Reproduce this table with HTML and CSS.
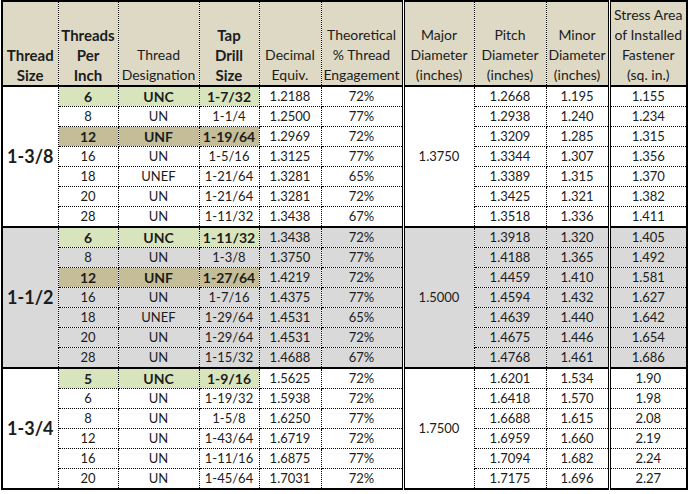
FILE: index.html
```html
<!DOCTYPE html>
<html>
<head>
<meta charset="utf-8">
<link rel="stylesheet" href="styles.css">
</head>
<body>
<table class="spec">
  <colgroup>
    <col class="c-size"><col class="c-tpi"><col class="c-des"><col class="c-tap"><col class="c-dec"><col class="c-eng"><col class="c-maj"><col class="c-pit"><col class="c-min"><col class="c-str">
  </colgroup>
  <thead>
    <tr class="head">
      <th class="b">Thread<br>Size</th>
      <th class="b">Threads<br>Per<br>Inch</th>
      <th>Thread<br>Designation</th>
      <th class="b">Tap<br>Drill<br>Size</th>
      <th>Decimal<br>Equiv.</th>
      <th>Theoretical<br>% Thread<br>Engagement</th>
      <th class="dbl">Major<br>Diameter<br>(inches)</th>
      <th>Pitch<br>Diameter<br>(inches)</th>
      <th>Minor<br>Diameter<br>(inches)</th>
      <th class="dbl">Stress Area<br>of Installed<br>Fastener<br>(sq. in.)</th>
    </tr>
  </thead>
  <tbody class="sec">
    <tr class="unc"><td class="size" rowspan="7">1-3/8</td><td class="hl">6</td><td class="hl">UNC</td><td class="hl">1-7/32</td><td>1.2188</td><td>72%</td><td class="maj dbl" rowspan="7">1.3750</td><td>1.2668</td><td>1.195</td><td class="dbl">1.155</td></tr>
    <tr><td>8</td><td>UN</td><td>1-1/4</td><td>1.2500</td><td>77%</td><td>1.2938</td><td>1.240</td><td class="dbl">1.234</td></tr>
    <tr class="unf"><td class="hl">12</td><td class="hl">UNF</td><td class="hl">1-19/64</td><td>1.2969</td><td>72%</td><td>1.3209</td><td>1.285</td><td class="dbl">1.315</td></tr>
    <tr><td>16</td><td>UN</td><td>1-5/16</td><td>1.3125</td><td>77%</td><td>1.3344</td><td>1.307</td><td class="dbl">1.356</td></tr>
    <tr><td>18</td><td>UNEF</td><td>1-21/64</td><td>1.3281</td><td>65%</td><td>1.3389</td><td>1.315</td><td class="dbl">1.370</td></tr>
    <tr><td>20</td><td>UN</td><td>1-21/64</td><td>1.3281</td><td>72%</td><td>1.3425</td><td>1.321</td><td class="dbl">1.382</td></tr>
    <tr><td>28</td><td>UN</td><td>1-11/32</td><td>1.3438</td><td>67%</td><td>1.3518</td><td>1.336</td><td class="dbl">1.411</td></tr>
  </tbody>
  <tbody class="sec grey">
    <tr class="unc"><td class="size" rowspan="7">1-1/2</td><td class="hl">6</td><td class="hl">UNC</td><td class="hl">1-11/32</td><td>1.3438</td><td>72%</td><td class="maj dbl" rowspan="7">1.5000</td><td>1.3918</td><td>1.320</td><td class="dbl">1.405</td></tr>
    <tr><td>8</td><td>UN</td><td>1-3/8</td><td>1.3750</td><td>77%</td><td>1.4188</td><td>1.365</td><td class="dbl">1.492</td></tr>
    <tr class="unf"><td class="hl">12</td><td class="hl">UNF</td><td class="hl">1-27/64</td><td>1.4219</td><td>72%</td><td>1.4459</td><td>1.410</td><td class="dbl">1.581</td></tr>
    <tr><td>16</td><td>UN</td><td>1-7/16</td><td>1.4375</td><td>77%</td><td>1.4594</td><td>1.432</td><td class="dbl">1.627</td></tr>
    <tr><td>18</td><td>UNEF</td><td>1-29/64</td><td>1.4531</td><td>65%</td><td>1.4639</td><td>1.440</td><td class="dbl">1.642</td></tr>
    <tr><td>20</td><td>UN</td><td>1-29/64</td><td>1.4531</td><td>72%</td><td>1.4675</td><td>1.446</td><td class="dbl">1.654</td></tr>
    <tr><td>28</td><td>UN</td><td>1-15/32</td><td>1.4688</td><td>67%</td><td>1.4768</td><td>1.461</td><td class="dbl">1.686</td></tr>
  </tbody>
  <tbody class="sec">
    <tr class="unc"><td class="size" rowspan="6">1-3/4</td><td class="hl">5</td><td class="hl">UNC</td><td class="hl">1-9/16</td><td>1.5625</td><td>72%</td><td class="maj dbl" rowspan="6">1.7500</td><td>1.6201</td><td>1.534</td><td class="dbl">1.90</td></tr>
    <tr><td>6</td><td>UN</td><td>1-19/32</td><td>1.5938</td><td>72%</td><td>1.6418</td><td>1.570</td><td class="dbl">1.98</td></tr>
    <tr><td>8</td><td>UN</td><td>1-5/8</td><td>1.6250</td><td>77%</td><td>1.6688</td><td>1.615</td><td class="dbl">2.08</td></tr>
    <tr><td>12</td><td>UN</td><td>1-43/64</td><td>1.6719</td><td>72%</td><td>1.6959</td><td>1.660</td><td class="dbl">2.19</td></tr>
    <tr><td>16</td><td>UN</td><td>1-11/16</td><td>1.6875</td><td>77%</td><td>1.7094</td><td>1.682</td><td class="dbl">2.24</td></tr>
    <tr><td>20</td><td>UN</td><td>1-45/64</td><td>1.7031</td><td>72%</td><td>1.7175</td><td>1.696</td><td class="dbl">2.27</td></tr>
  </tbody>
</table>
</body>
</html>
```

FILE: styles.css
```css
html, body {
  margin: 0;
  padding: 0;
  background: #ffffff;
}

body {
  padding: 0 0 0 1px;
  font-family: Lato, "Open Sans", sans-serif;
  font-size: 13px;
  color: #1c1c1c;
}

.spec {
  border-collapse: collapse;
  table-layout: fixed;
  width: 687px;
  border: 2px solid #000;
}

.c-size { width: 56px; }
.c-tpi { width: 60px; }
.c-des { width: 81px; }
.c-tap { width: 60px; }
.c-dec { width: 62px; }
.c-eng { width: 82px; }
.c-maj { width: 71px; }
.c-pit { width: 72px; }
.c-min { width: 63px; }
.c-str { width: 78px; }

.spec th,
.spec td {
  border: 1px dotted #000;
  padding: 0;
  text-align: center;
  white-space: nowrap;
  overflow: hidden;
}

.head {
  height: 85px;
  background: #ddd9c4;
}

.head th {
  font-weight: normal;
  font-size: 14px;
  vertical-align: bottom;
  line-height: 20px;
  padding-bottom: 0;
  border-bottom: 2px solid #000;
}

.head th.b {
  font-weight: bold;
  font-size: 15px;
}

.sec {
  border-top: 2px solid #000;
}

.sec td {
  height: 19px;
  line-height: 19px;
}

.grey td {
  background: #d9d9d9;
}

.spec .dbl {
  border-left: 3px double #000;
}

.size {
  font-size: 18px;
  font-weight: bold;
  vertical-align: middle;
}

.maj {
  vertical-align: middle;
}

.unc td.hl {
  background: #d8e4bc;
  font-weight: bold;
  font-size: 14px;
}

.unf td.hl {
  background: #c4bd97;
  font-weight: bold;
  font-size: 14px;
}
```
